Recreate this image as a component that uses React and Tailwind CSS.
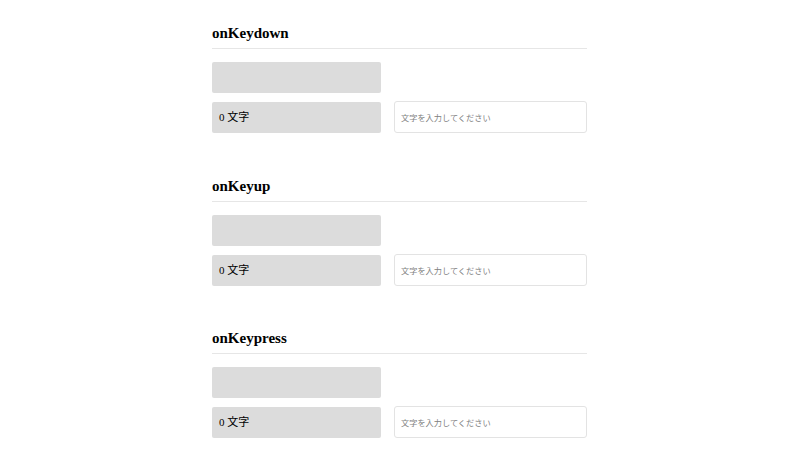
import React, { useState } from 'react';

const Section = ({ title }) => {
    const [text, setText] = useState('');

    return (
        <section className="w-[375px] ml-[212px]">
            <h2 className="text-[15px] leading-[22px] font-bold text-black pb-[4px] border-b border-[#e6e6e6]" style={{ fontFamily: '"Liberation Serif", serif' }}>
                {title}
            </h2>
            <div className="mt-[13px] w-[169px] h-[31px] bg-[#dcdcdc] rounded-[2px]"></div>
            <div className="mt-[8px] flex items-end gap-[13px]">
                <div className="w-[169px] h-[31px] bg-[#dcdcdc] rounded-[2px] flex items-center pl-[7px] text-[11px] text-black" style={{ fontFamily: '"Liberation Serif", "Noto Sans CJK JP", serif' }}>
                    {text.length} 文字
                </div>
                <input
                    type="text"
                    value={text}
                    onChange={e => setText(e.target.value)}
                    placeholder="文字を入力してください"
                    className="w-[193px] h-[32px] border border-[#e3e3e3] rounded-[3px] px-[6px] text-[8.2px] text-black placeholder:text-[#808080] outline-none"
                    style={{ fontFamily: '"Noto Sans CJK JP", sans-serif' }}
                />
            </div>
        </section>
    );
};

export default function App() {
    return (
        <div className="w-[800px] h-[450px] bg-white overflow-hidden pt-[22px] flex flex-col gap-[41.5px]">
            <Section title="onKeydown" />
            <Section title="onKeyup" />
            <Section title="onKeypress" />
        </div>
    );
}
